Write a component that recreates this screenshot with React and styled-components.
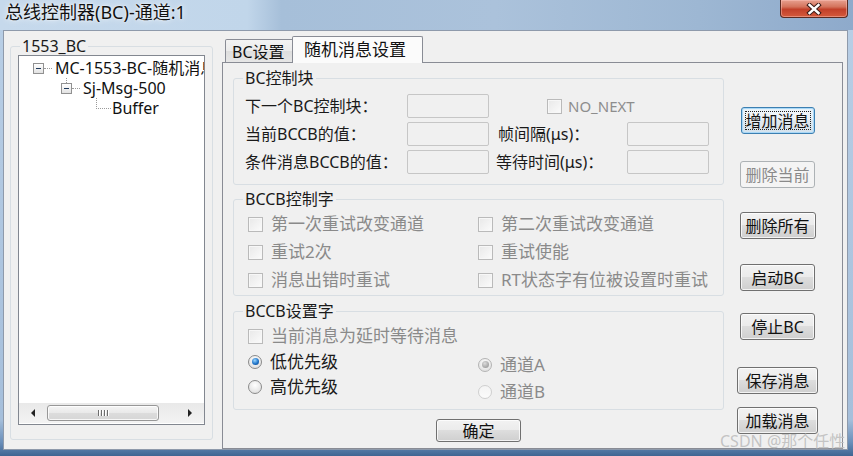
import React from "react";
import styled, { createGlobalStyle, css } from "styled-components";

const FONT = `"Noto Sans", "Noto Sans CJK SC", sans-serif`;

const GlobalStyle = createGlobalStyle`
  * { box-sizing: border-box; }
  html, body { margin: 0; padding: 0; overflow: hidden; background: #f0f0f0; }
  body { font-family: ${FONT}; }
`;

const Window = styled.div`
  position: relative;
  width: 853px;
  height: 456px;
  overflow: hidden;
  display: flex;
  flex-direction: column;
  font-family: ${FONT};
  color: #1a1a1a;
  background: linear-gradient(180deg, #b9cfe6 0%, #a6bfdb 92%, #6a8fba 97%, #3f6592 100%);
`;

const TitleBar = styled.div`
  flex: none;
  height: 30px;
  display: flex;
  align-items: flex-start;
  background: linear-gradient(
    90deg,
    #c6d9ec 0%,
    #c1d6ea 29%,
    #a6bfd9 33%,
    #abc2db 58%,
    #9db7d3 82%,
    #8eaacb 100%
  );
`;

const Title = styled.div`
  padding: 1px 0 0 5px;
  font-size: 18px;
  line-height: 22px;
  color: #111;
  text-shadow: 0 0 6px rgba(255, 255, 255, 0.95), 0 0 2px rgba(255, 255, 255, 0.9);
`;

const CloseButton = styled.div`
  margin-left: auto;
  margin-right: 5px;
  width: 68px;
  height: 18px;
  border: 1px solid #5a2a22;
  border-top: none;
  border-radius: 0 0 4px 4px;
  background: linear-gradient(180deg, #e7a08f 0%, #d4735c 40%, #c2402a 55%, #d45a3c 100%);
  box-shadow: inset 0 0 0 1px rgba(255, 200, 190, 0.45);
  display: flex;
  align-items: center;
  justify-content: center;
`;

const Client = styled.div`
  flex: 1;
  min-height: 0;
  margin: 0 5px 6px 3px;
  border: 1px solid #8e9aab;
  background: #f0f0f0;
  display: flex;
`;

/* ---------- group boxes ---------- */

const GroupBox = styled.fieldset`
  margin: 0;
  min-width: 0;
  border: 1px solid #d8dee3;
  border-radius: 3px;
  padding: ${(p) => p.$pad};
`;

const GroupTitle = styled.legend`
  padding: 0 2px;
  margin-left: -2px;
  font-size: 16px;
  line-height: 18px;
  color: #1a1a1a;
`;

/* ---------- left tree ---------- */

const TreeGroup = styled(GroupBox)`
  width: 203px;
  margin: 6px 0 9px 6px;
  display: flex;
  flex-direction: column;
`;

const TreeGroupTitle = styled(GroupTitle)`
  margin-left: 2px;
`;

const TreeBox = styled.div`
  flex: 1;
  display: flex;
  flex-direction: column;
  border: 1px solid #828790;
  background: #fff;
  overflow: hidden;
`;

const TreeList = styled.div`
  flex: 1;
  padding-top: 2px;
`;

const TreeRow = styled.div`
  height: 20px;
  display: flex;
  align-items: center;
  padding-left: ${(p) => p.$indent}px;
  font-size: 16px;
  line-height: 20px;
  color: #111;
  white-space: nowrap;
  overflow: hidden;
`;

const Expander = styled.span`
  position: relative;
  flex: none;
  width: 11px;
  height: 11px;
  border: 1px solid #919191;
  background: linear-gradient(180deg, #ffffff, #e2e2e2);
  display: flex;
  align-items: center;
  justify-content: center;

  &::before {
    content: "";
    width: 5px;
    height: 1px;
    background: #1e395b;
  }

  ${(p) =>
    p.$tick &&
    css`
      &::after {
        content: "";
        position: absolute;
        left: 4px;
        top: -6px;
        height: 5px;
        border-left: 1px dotted #9a9a9a;
      }
    `}
`;

const Dots = styled.span`
  flex: none;
  width: 8px;
  margin-right: 3px;
  border-top: 1px dotted #9a9a9a;
`;

const LeafLine = styled.span`
  position: relative;
  flex: none;
  width: 14px;
  align-self: stretch;
  margin-right: 2px;

  &::before {
    content: "";
    position: absolute;
    left: 0;
    top: -4px;
    width: 14px;
    height: 14px;
    border-left: 1px dotted #9a9a9a;
    border-bottom: 1px dotted #9a9a9a;
  }
`;

const ScrollBar = styled.div`
  flex: none;
  height: 20px;
  margin-bottom: 1px;
  display: flex;
  align-items: center;
  background: linear-gradient(180deg, #e9e9e9, #f3f3f3);
`;

const ScrollArrow = styled.div`
  width: 28px;
  height: 100%;
  display: flex;
  align-items: center;
  justify-content: center;
`;

const ScrollThumb = styled.div`
  width: 112px;
  height: 16px;
  border: 1px solid #979797;
  border-radius: 3px;
  background: linear-gradient(180deg, #f4f4f4 0%, #e9e9e9 50%, #dcdcdc 51%, #d6d6d6 100%);
  box-shadow: inset 0 0 0 1px rgba(255, 255, 255, 0.8);
  display: flex;
  align-items: center;
  justify-content: center;
  gap: 2px;
`;

const Grip = styled.span`
  width: 1px;
  height: 6px;
  background: #6d6d6d;
  box-shadow: 1px 0 0 #fff;
`;

const ScrollSpace = styled.div`
  flex: 1;
`;

/* ---------- tabs ---------- */

const TabControl = styled.div`
  flex: 1;
  min-width: 0;
  margin: 5px 4px 0 9px;
  display: flex;
  flex-direction: column;
`;

const TabStrip = styled.div`
  flex: none;
  height: 26px;
  display: flex;
  align-items: flex-end;
  padding-left: 3px;
`;

const Tab = styled.div`
  position: relative;
  display: flex;
  align-items: center;
  width: ${(p) => p.$w}px;
  border: 1px solid #898c95;
  border-bottom: none;
  border-radius: 2px 2px 0 0;
  color: #111;
  white-space: nowrap;
  ${(p) =>
    p.$active
      ? css`
          z-index: 1;
          height: 27px;
          margin-left: -2px;
          margin-bottom: -1px;
          padding: 0 0 3px 11px;
          font-size: 17px;
          background: #fbfbfb;
        `
      : css`
          height: 23px;
          padding-left: 6px;
          font-size: 16px;
          background: linear-gradient(180deg, #f3f3f3 0%, #ebebeb 50%, #dedede 51%, #e6e6e6 100%);
        `}
`;

const TabPanel = styled.div`
  flex: 1;
  min-height: 0;
  border: 1px solid #898c95;
  background: #f0f0f0;
  display: flex;
  gap: 11px;
  padding: 6px 0 0 10px;
`;

const LeftCol = styled.div`
  width: 491px;
  display: flex;
  flex-direction: column;
`;

const RightCol = styled.div`
  width: 85px;
  display: flex;
  flex-direction: column;
  align-items: center;
`;

/* ---------- BC control block ---------- */

const BlockGrid = styled.div`
  display: grid;
  grid-template-columns: 162px 82px 138px 82px;
  grid-auto-rows: 24px;
  row-gap: 4px;
  align-items: center;
`;

const FieldLabel = styled.span`
  font-size: 16px;
  line-height: 24px;
  white-space: nowrap;
  padding-left: ${(p) => p.$pad || 0}px;
  color: #1a1a1a;
`;

const Edit = styled.div`
  width: 82px;
  height: 24px;
  border: 1px solid #c6c6c6;
  border-radius: 2px;
  background: #f0f0f0;
`;

const NoNext = styled.div`
  grid-column: 3 / 5;
  padding-left: 58px;
  display: flex;
  align-items: center;
  gap: 6px;
  font-size: 15px;
  color: #8d8d8d;
`;

/* ---------- options ---------- */

const OptionGrid = styled.div`
  display: grid;
  grid-template-columns: 230px 1fr;
  grid-auto-rows: 24px;
  row-gap: ${(p) => p.$gap}px;
`;

const Option = styled.div`
  grid-column: ${(p) => (p.$span ? "1 / 3" : "auto")};
  display: flex;
  align-items: center;
  gap: 8px;
  height: 24px;
  margin: ${(p) => p.$shift || 0}px 0 0 3px;
  font-size: 17px;
  line-height: 24px;
  white-space: nowrap;
  color: ${(p) => (p.$disabled ? "#8a8a8a" : "#1a1a1a")};
`;

const CheckBox = styled.span`
  flex: none;
  width: 15px;
  height: 15px;
  border: 1px solid #bababa;
  background: linear-gradient(135deg, #e8e8e8, #fbfbfb);
  box-shadow: inset 0 0 0 1px #f7f7f7;
`;

const RadioDot = styled.span`
  flex: none;
  width: 14px;
  height: 14px;
  border-radius: 50%;
  display: flex;
  align-items: center;
  justify-content: center;
  border: 1px solid ${(p) => (p.$disabled ? (p.$checked ? "#b4b4b4" : "#cfcfcf") : "#8a8a8a")};
  background: ${(p) =>
    p.$disabled && !p.$checked
      ? "linear-gradient(180deg, #f4f4f4, #fbfbfb)"
      : "radial-gradient(circle at 50% 35%, #ffffff, #d9d9d9)"};

  &::after {
    content: "";
    display: ${(p) => (p.$checked ? "block" : "none")};
    width: 7px;
    height: 7px;
    border-radius: 50%;
    background: ${(p) =>
      p.$disabled
        ? "radial-gradient(circle at 40% 35%, #dcdcdc, #a3a3a3 70%)"
        : "radial-gradient(circle at 40% 35%, #9ad6ff, #1f74c9 55%, #0f3f7c 100%)"};
  }
`;

/* ---------- buttons ---------- */

const Button = styled.button`
  position: relative;
  flex: none;
  width: ${(p) => p.$w}px;
  height: ${(p) => p.$h || 27}px;
  margin-top: ${(p) => p.$mt || 0}px;
  padding: 0;
  font-family: ${FONT};
  font-size: 16px;
  line-height: 1;
  color: #111;
  border: 1px solid #707070;
  border-radius: 3px;
  background: linear-gradient(180deg, #f2f2f2 0%, #ebebeb 49%, #dddddd 50%, #cfcfcf 100%);
  box-shadow: inset 0 0 0 1px rgba(255, 255, 255, 0.75);

  ${(p) =>
    p.$focused &&
    css`
      border-color: #3c7fb1;
      box-shadow: inset 0 0 0 1px #a9d8f7, inset 0 0 4px #c6e6fb;
      background: linear-gradient(180deg, #f4f8fb 0%, #edf2f6 49%, #e1e9ef 50%, #d7e1e9 100%);

      &::after {
        content: "";
        position: absolute;
        inset: 3px;
        border: 1px dotted #222;
      }
    `}

  &:disabled {
    color: #8a8a8a;
    border-color: #adb2b5;
    background: #f4f4f4;
    box-shadow: none;
  }
`;

const ConfirmButton = styled(Button)`
  align-self: center;
`;

const Watermark = styled.div`
  position: absolute;
  left: 720px;
  top: 433px;
  font-size: 16px;
  line-height: 16px;
  color: rgba(190, 190, 190, 0.9);
  white-space: nowrap;
  pointer-events: none;
`;

const rightButtons = [
  { label: "增加消息", w: 74, mt: 38, focused: true },
  { label: "删除当前", w: 75, mt: 27, disabled: true },
  { label: "删除所有", w: 76, mt: 24 },
  { label: "启动BC", w: 75, mt: 25 },
  { label: "停止BC", w: 75, mt: 22 },
  { label: "保存消息", w: 81, mt: 27 },
  { label: "加载消息", w: 81, mt: 13 },
];

const controlWordOptions = [
  "第一次重试改变通道",
  "第二次重试改变通道",
  "重试2次",
  "重试使能",
  "消息出错时重试",
  "RT状态字有位被设置时重试",
];

const Triangle = ({ dir }) => (
  <svg width="6" height="8" viewBox="0 0 6 8">
    <polygon points={dir === "left" ? "5,0 5,8 1,4" : "1,0 1,8 5,4"} fill="#222" />
  </svg>
);

export default function App() {
  return (
    <>
      <GlobalStyle />
      <Window>
        <TitleBar>
          <Title>总线控制器(BC)-通道:1</Title>
          <CloseButton>
            <svg width="20" height="12" viewBox="0 0 20 12">
              <path d="M5.5 2 L14.5 10 M14.5 2 L5.5 10" stroke="#3b1c18" strokeWidth="4.4" strokeLinecap="square" />
              <path d="M5.5 2 L14.5 10 M14.5 2 L5.5 10" stroke="#ffffff" strokeWidth="2.4" strokeLinecap="square" />
            </svg>
          </CloseButton>
        </TitleBar>

        <Client>
          <TreeGroup $pad="0 7px 14px">
            <TreeGroupTitle>1553_BC</TreeGroupTitle>
            <TreeBox>
              <TreeList>
                <TreeRow $indent={14}>
                  <Expander />
                  <Dots />
                  MC-1553-BC-随机消息
                </TreeRow>
                <TreeRow $indent={42}>
                  <Expander $tick />
                  <Dots />
                  Sj-Msg-500
                </TreeRow>
                <TreeRow $indent={77}>
                  <LeafLine />
                  Buffer
                </TreeRow>
              </TreeList>
              <ScrollBar>
                <ScrollArrow>
                  <Triangle dir="left" />
                </ScrollArrow>
                <ScrollThumb>
                  <Grip />
                  <Grip />
                  <Grip />
                  <Grip />
                </ScrollThumb>
                <ScrollSpace />
                <ScrollArrow>
                  <Triangle dir="right" />
                </ScrollArrow>
              </ScrollBar>
            </TreeBox>
          </TreeGroup>

          <TabControl>
            <TabStrip>
              <Tab $w={69}>BC设置</Tab>
              <Tab $w={131} $active>
                随机消息设置
              </Tab>
            </TabStrip>
            <TabPanel>
              <LeftCol>
                <GroupBox $pad="7px 0 10px 11px">
                  <GroupTitle>BC控制块</GroupTitle>
                  <BlockGrid>
                    <FieldLabel>下一个BC控制块：</FieldLabel>
                    <Edit />
                    <NoNext>
                      <CheckBox />
                      NO_NEXT
                    </NoNext>
                    <FieldLabel>当前BCCB的值：</FieldLabel>
                    <Edit />
                    <FieldLabel $pad={9}>帧间隔(μs)：</FieldLabel>
                    <Edit />
                    <FieldLabel>条件消息BCCB的值：</FieldLabel>
                    <Edit />
                    <FieldLabel $pad={7}>等待时间(μs)：</FieldLabel>
                    <Edit />
                  </BlockGrid>
                </GroupBox>

                <GroupBox $pad="4px 0 3px 11px" style={{ marginTop: 5 }}>
                  <GroupTitle>BCCB控制字</GroupTitle>
                  <OptionGrid $gap={4}>
                    {controlWordOptions.map((label) => (
                      <Option key={label} $disabled>
                        <CheckBox />
                        {label}
                      </Option>
                    ))}
                  </OptionGrid>
                </GroupBox>

                <GroupBox $pad="4px 0 10px 11px" style={{ marginTop: 6 }}>
                  <GroupTitle>BCCB设置字</GroupTitle>
                  <OptionGrid $gap={1.5}>
                    <Option $span $disabled>
                      <CheckBox />
                      当前消息为延时等待消息
                    </Option>
                    <Option>
                      <RadioDot $checked />
                      低优先级
                    </Option>
                    <Option $disabled $shift={3}>
                      <RadioDot $checked $disabled />
                      通道A
                    </Option>
                    <Option>
                      <RadioDot />
                      高优先级
                    </Option>
                    <Option $disabled $shift={5}>
                      <RadioDot $disabled />
                      通道B
                    </Option>
                  </OptionGrid>
                </GroupBox>

                <ConfirmButton $w={85} $h={23} $mt={9}>
                  确定
                </ConfirmButton>
              </LeftCol>

              <RightCol>
                {rightButtons.map((b) => (
                  <Button
                    key={b.label}
                    $w={b.w}
                    $mt={b.mt}
                    $focused={b.focused}
                    disabled={b.disabled}
                  >
                    {b.label}
                  </Button>
                ))}
              </RightCol>
            </TabPanel>
          </TabControl>
        </Client>

        <Watermark>CSDN @那个任性</Watermark>
      </Window>
    </>
  );
}
